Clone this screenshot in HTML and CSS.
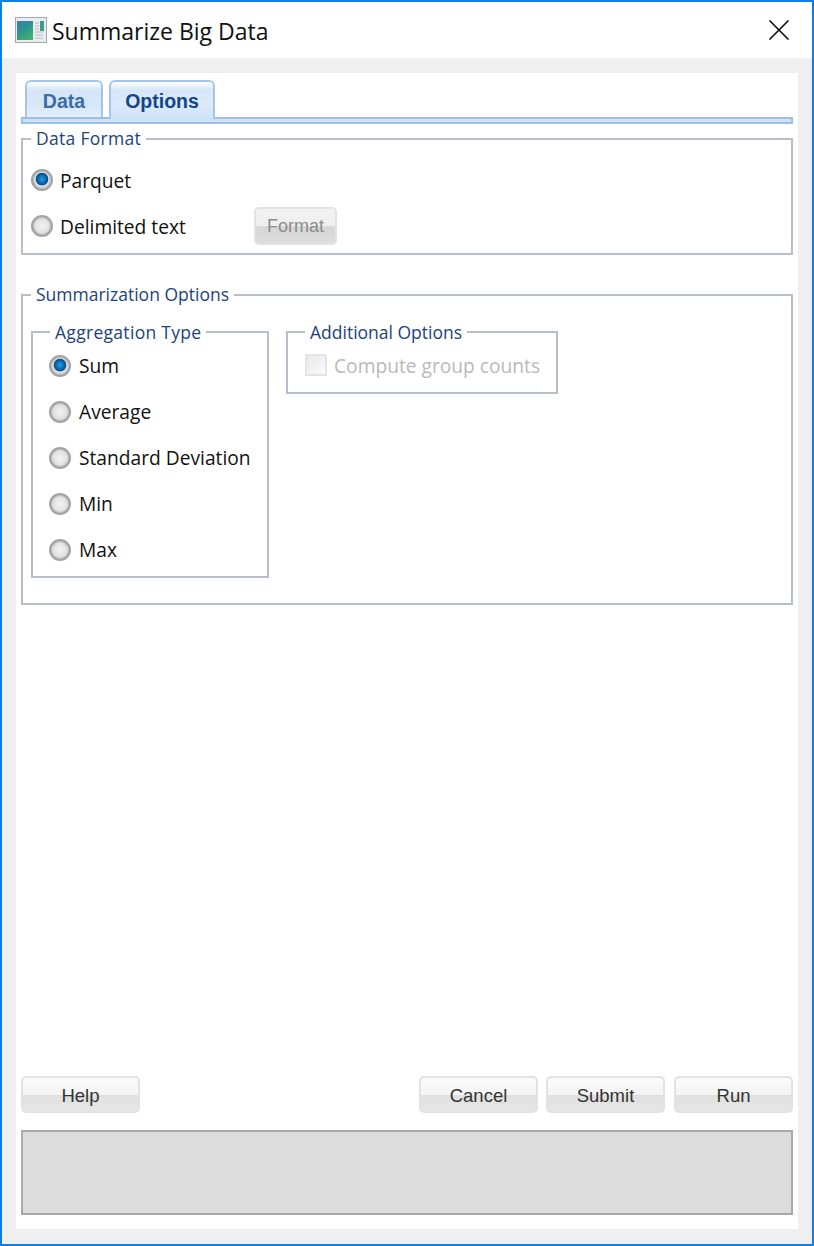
FILE: index.html
```html
<!DOCTYPE html>
<html lang="en">
<head>
  <meta charset="UTF-8" />
  <title>Summarize Big Data</title>
  <link rel="stylesheet" href="styles.css">
</head>
<body>
  <div class="window">
    <div class="titlebar">
      <svg class="app-icon" width="32" height="26" viewBox="0 0 32 26">
        <defs>
          <linearGradient id="pane" x1="0" y1="0" x2="0.6" y2="1">
            <stop offset="0" stop-color="#3f78b0"/>
            <stop offset="0.6" stop-color="#2d9a86"/>
            <stop offset="1" stop-color="#46ad70"/>
          </linearGradient>
        </defs>
        <rect x="0.5" y="0.5" width="31" height="25" fill="#e9edf0" stroke="#a4a8ab"/>
        <rect x="2" y="4" width="16" height="19" fill="url(#pane)"/>
        <rect x="25" y="4" width="4" height="10" fill="#3f9a92"/>
        <path d="M20 6h4M20 9h4M20 12h4M20 15h8M20 18h8M20 21h8" stroke="#b4bcc2" stroke-width="1"/>
      </svg>
      <span class="title">Summarize Big Data</span>
      <svg class="close" width="22" height="20" viewBox="0 0 22 20">
        <path d="M1.5 0.5L20.5 19.5M20.5 0.5L1.5 19.5" stroke="#111" stroke-width="1.6" fill="none"/>
      </svg>
    </div>

    <div class="client">
      <div class="panel">
        <div class="tabs">
          <div class="tab">Data</div>
          <div class="tab active">Options</div>
        </div>
        <div class="tab-strip"></div>

        <fieldset class="group format-group">
          <legend>Data Format</legend>
          <div class="row">
            <span class="radio checked"></span>
            <span class="label">Parquet</span>
          </div>
          <div class="row">
            <span class="radio"></span>
            <span class="label delimited">Delimited text</span>
            <button class="btn format-btn" disabled>Format</button>
          </div>
        </fieldset>

        <fieldset class="group summary-group">
          <legend>Summarization Options</legend>
          <div class="summary-cols">
            <fieldset class="group aggregation">
              <legend>Aggregation Type</legend>
              <div class="row">
                <span class="radio checked"></span>
                <span class="label">Sum</span>
              </div>
              <div class="row">
                <span class="radio"></span>
                <span class="label">Average</span>
              </div>
              <div class="row">
                <span class="radio"></span>
                <span class="label">Standard Deviation</span>
              </div>
              <div class="row">
                <span class="radio"></span>
                <span class="label">Min</span>
              </div>
              <div class="row">
                <span class="radio"></span>
                <span class="label">Max</span>
              </div>
            </fieldset>
            <fieldset class="group additional">
              <legend>Additional Options</legend>
              <div class="check-row">
                <span class="checkbox"></span>
                <span class="label disabled">Compute group counts</span>
              </div>
            </fieldset>
          </div>
        </fieldset>

        <div class="actions">
          <button class="btn action-btn help-btn">Help</button>
          <button class="btn action-btn cancel-btn">Cancel</button>
          <button class="btn action-btn">Submit</button>
          <button class="btn action-btn">Run</button>
        </div>
        <div class="status"></div>
      </div>
    </div>
  </div>
</body>
</html>
```

FILE: styles.css
```css
html, body {
  margin: 0;
  padding: 0;
}
body {
  font-family: "Open Sans", "Noto Sans", sans-serif;
  background: #fff;
}
.window {
  box-sizing: border-box;
  width: 814px;
  height: 1246px;
  border: 2px solid #0a80e6;
  display: flex;
  flex-direction: column;
}
.titlebar {
  height: 56px;
  flex: none;
  display: flex;
  align-items: center;
  background: #fff;
  padding: 0 22px 0 13px;
}
.app-icon {
  flex: none;
  margin-top: -1px;
}
.title {
  margin-left: 5px;
  padding-top: 2px;
  font-size: 23px;
  color: #111;
}
.close {
  margin-left: auto;
  margin-top: -1px;
}
.client {
  flex: 1;
  display: flex;
  background: #efefef;
  padding: 15px 14px 15px 14px;
}
.panel {
  flex: 1;
  background: #fff;
  padding: 7px 5px 14px 5px;
  display: flex;
  flex-direction: column;
}
.tabs {
  height: 37px;
  flex: none;
  display: flex;
  align-items: flex-start;
  gap: 6px;
  padding-left: 4px;
  border-bottom: 2px solid #9dbfe6;
}
.tab {
  box-sizing: border-box;
  width: 78px;
  height: 37px;
  border: 2px solid #a3c5ea;
  border-bottom: none;
  border-radius: 6px 6px 0 0;
  background: linear-gradient(#ffffff 0, #d5e6f8 8px, #d5e6f8 60%, #e4effa 100%);
  color: #3d6da5;
  font-family: "Liberation Sans", sans-serif;
  font-weight: bold;
  font-size: 19.5px;
  text-align: center;
  line-height: 38px;
}
.tab.active {
  width: 106px;
  height: 39px;
  background: linear-gradient(#ffffff 0, #d5e6f8 8px, #dceafa 60%, #cfe3f8 100%);
  color: #12458a;
}
.tab-strip {
  height: 3px;
  flex: none;
  background: #cfe3f8;
  border: 2px solid #9dbfe6;
  border-top: none;
  margin-bottom: 4px;
}
.group {
  margin: 0;
  padding: 0;
  min-width: 0;
  border: 2px solid #b9bccd;
}
.group legend {
  padding: 0 5px;
  height: 22px;
  line-height: 22px;
  font-family: "Open Sans", sans-serif;
  font-size: 17.5px;
  color: #1c437e;
}
.format-group {
  height: 127px;
  box-sizing: border-box;
  padding: 7px 8px 0 8px;
}
.format-group > legend,
.summary-group > legend {
  line-height: 20px;
}
.format-group > legend,
.aggregation > legend {
  letter-spacing: 0.3px;
}
.format-group .label,
.check-row .label {
  padding-bottom: 0;
}
.summary-group {
  margin-top: 29px;
  height: 321px;
  box-sizing: border-box;
  padding: 15px 8px 0 8px;
}
.summary-cols {
  display: flex;
  align-items: flex-start;
  gap: 17px;
}
.aggregation {
  box-sizing: border-box;
  width: 238px;
  height: 257px;
  padding: 0 0 0 16px;
}
.aggregation > legend {
  margin-left: 1px;
}
.aggregation .label {
  margin-left: 8px;
}
.additional {
  box-sizing: border-box;
  width: 272px;
  height: 73px;
  padding: 0 0 0 17px;
}
.row {
  height: 46px;
  display: flex;
  align-items: center;
}
.radio {
  flex: none;
  box-sizing: border-box;
  width: 22px;
  height: 22px;
  border-radius: 50%;
  border: 2px solid #a3a3a3;
  background: radial-gradient(circle at 50% 50%, #f2f2f2 0, #e2e2e2 55%, #c4c4c4 100%);
  box-shadow: inset 0 0 2px #8a8a8a;
}
.radio.checked {
  background: radial-gradient(circle at 50% 45%, #2d9ae0 0, #0a6bb4 30%, #074a82 44%, #dfe3e8 50%, #c2c6cc 100%);
}
.label {
  margin-left: 7px;
  padding-bottom: 2px;
  font-size: 19.2px;
  color: #111;
}
.delimited {
  width: 194px;
  flex: none;
}
.btn {
  box-sizing: border-box;
  border: 2px solid #e2e2e2;
  border-radius: 5px;
  padding: 0;
  font-family: "Liberation Sans", sans-serif;
  background: linear-gradient(#fbfbfb 0, #f4f4f4 50%, #e0e0e0 52%, #e6e6e6 100%);
}
.format-btn {
  width: 83px;
  height: 38px;
  font-size: 18px;
  color: #8c8c8c;
  background: linear-gradient(#f2f2f2 0, #eeeeee 50%, #d6d6d6 52%, #dcdcdc 100%);
}
.actions {
  margin-top: auto;
  display: flex;
  gap: 9px;
}
.action-btn {
  width: 119px;
  height: 37px;
  padding: 2px 0 0 0;
  font-size: 18.5px;
  color: #333;
}
.help-btn {
  margin-right: auto;
}
.cancel-btn {
  margin-right: -1px;
}
.status {
  box-sizing: border-box;
  margin-top: 17px;
  height: 85px;
  background: #dcdcdc;
  border: 2px solid #a9a9a9;
}
.check-row {
  display: flex;
  align-items: center;
  height: 24px;
  margin-top: 10px;
}
.checkbox {
  flex: none;
  box-sizing: border-box;
  width: 22px;
  height: 22px;
  border: 2px solid #e4e4e4;
  background: linear-gradient(135deg, #e8e8e8, #fbfbfb);
}
.label.disabled {
  margin-left: 7px;
  color: #b9b9b9;
}
```
